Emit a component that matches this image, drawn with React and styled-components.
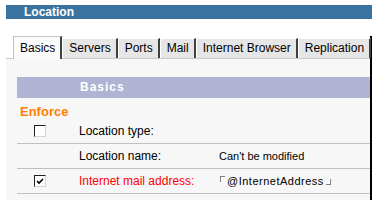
import styled, { createGlobalStyle } from "styled-components";

const GlobalStyle = createGlobalStyle`
  body {
    margin: 0;
    background: #ffffff;
    font-family: "Liberation Sans", Arial, sans-serif;
  }
`;

const Page = styled.div`
  width: 372px;
  height: 200px;
  padding: 5px 0 0 6px;
  box-sizing: border-box;
  overflow: hidden;
`;

const TitleBar = styled.div`
  height: 14px;
  line-height: 15px;
  background: #3a72a0;
  color: #ffffff;
  font-size: 12px;
  font-weight: bold;
  padding-left: 18px;
`;

const Frame = styled.div`
  margin-top: 17px;
  height: 164px;
  border-right: 2px solid #000000;
  display: flex;
  flex-direction: column;
`;

const TabList = styled.div`
  display: flex;
  align-items: flex-end;
  height: 22px;
  padding-left: 7px;
  border-bottom: 1px solid #c8c8c8;
  background: #ffffff;
`;

const Tab = styled.div`
  position: relative;
  box-sizing: border-box;
  height: ${(p) => (p.$active ? "23px" : "20px")};
  margin-bottom: ${(p) => (p.$active ? "-1px" : "0")};
  padding: ${(p) => (p.$active ? "4px 5px 0 6px" : "2px 5px 0 6px")};
  font-size: 12px;
  line-height: 14px;
  color: #000000;
  background: ${(p) => (p.$active ? "#fbfbfb" : "#e6e6e6")};
  border-top: 1px solid ${(p) => (p.$active ? "#c4c4c4" : "#ffffff")};
  border-left: 1px solid ${(p) => (p.$active ? "#c4c4c4" : "#ffffff")};
  border-right: 2px solid #404040;
  white-space: nowrap;
`;

const Panel = styled.div`
  flex: 1;
  background: #f7f7f7;
  padding: 18px 0 0 11px;
`;

const SectionBar = styled.div`
  height: 21px;
  line-height: 21px;
  background: #b0b3d3;
  color: #ffffff;
  font-size: 12px;
  font-weight: bold;
  letter-spacing: 1px;
  padding-left: 63px;
`;

const Enforce = styled.div`
  margin-top: 6px;
  height: 15px;
  line-height: 15px;
  padding-left: 3px;
  color: #ff8000;
  font-size: 13px;
  font-weight: bold;
`;

const Row = styled.div`
  display: grid;
  grid-template-columns: 62px 140px 1fr;
  align-items: center;
  height: 24px;
  border-bottom: 1px solid #c0c0c0;
`;

const CheckCell = styled.div`
  padding-left: 17px;
  display: flex;
  align-items: center;
`;

const Box = styled.span`
  box-sizing: border-box;
  width: 12px;
  height: 12px;
  background: #ffffff;
  border-top: 1px solid #202020;
  border-left: 1px solid #202020;
  border-right: 1px solid #d4d4d4;
  border-bottom: 1px solid #d4d4d4;
  display: flex;
  align-items: center;
  justify-content: center;
`;

const Label = styled.div`
  font-size: 12px;
  color: ${(p) => (p.$required ? "#ff0000" : "#000000")};
  white-space: nowrap;
`;

const Value = styled.div`
  font-size: 11px;
  color: #000000;
  white-space: nowrap;
  display: flex;
  align-items: center;
`;

const Address = styled.span`
  font-size: 11px;
  letter-spacing: 0.5px;
  padding: 0 2px 0 2px;
`;

const CornerOpen = styled.span`
  align-self: flex-start;
  margin: 1px 0 0 1px;
  width: 4px;
  height: 5px;
  border-top: 1px solid #808080;
  border-left: 1px solid #808080;
  box-shadow: inset 1px 1px 0 #ffffff;
`;

const CornerClose = styled.span`
  align-self: flex-end;
  margin-bottom: 2px;
  width: 4px;
  height: 5px;
  border-bottom: 1px solid #808080;
  border-right: 1px solid #808080;
  box-shadow: inset -1px -1px 0 #ffffff;
`;

const Checkbox = ({ checked }) => (
  <Box>
    {checked && (
      <svg width="8" height="7" viewBox="0 0 8 7">
        <path d="M1 3 L3 5 L7 1" stroke="#000" strokeWidth="1.6" fill="none" />
      </svg>
    )}
  </Box>
);

const tabs = ["Basics", "Servers", "Ports", "Mail", "Internet Browser", "Replication"];

export default function App() {
  return (
    <>
      <GlobalStyle />
      <Page>
        <TitleBar>Location</TitleBar>
        <Frame>
          <TabList>
            {tabs.map((t, i) => (
              <Tab key={t} $active={i === 0}>
                {t}
              </Tab>
            ))}
          </TabList>
          <Panel>
            <SectionBar>Basics</SectionBar>
            <Enforce>Enforce</Enforce>
            <Row>
              <CheckCell>
                <Checkbox />
              </CheckCell>
              <Label>Location type:</Label>
              <Value />
            </Row>
            <Row>
              <CheckCell />
              <Label>Location name:</Label>
              <Value>Can't be modified</Value>
            </Row>
            <Row>
              <CheckCell>
                <Checkbox checked />
              </CheckCell>
              <Label $required>Internet mail address:</Label>
              <Value>
                <CornerOpen />
                <Address>@InternetAddress</Address>
                <CornerClose />
              </Value>
            </Row>
          </Panel>
        </Frame>
      </Page>
    </>
  );
}
